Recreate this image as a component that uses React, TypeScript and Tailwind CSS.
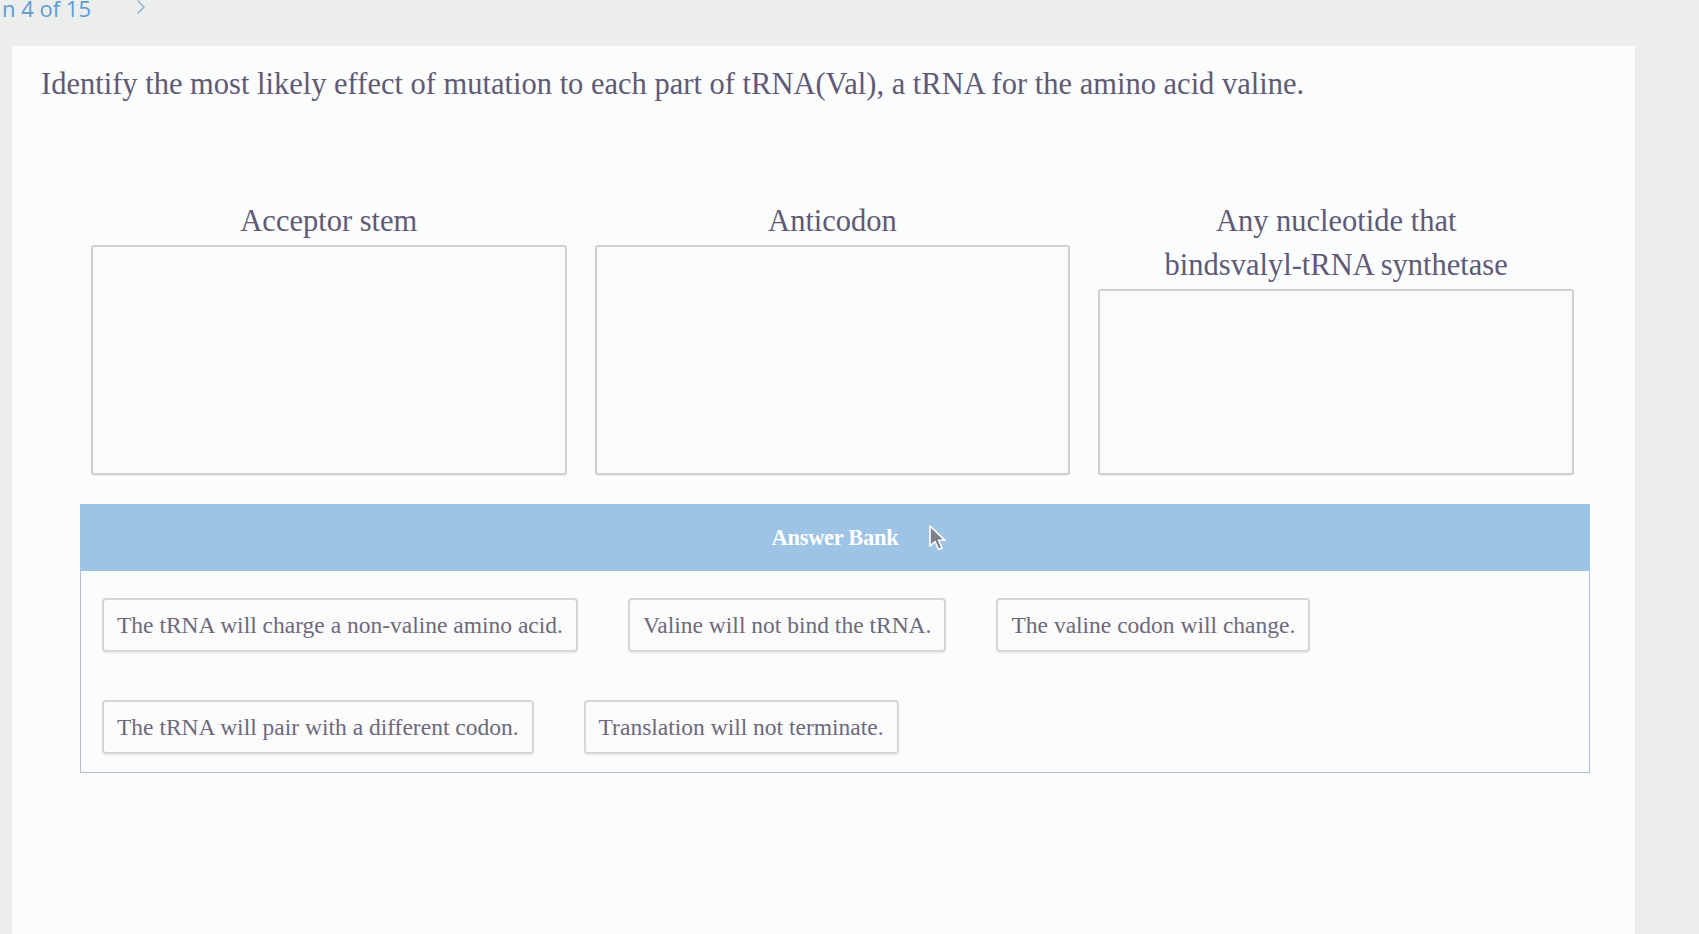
import { ChevronRight } from "lucide-react";

const serif = { fontFamily: '"Liberation Serif", "Times New Roman", serif' };

const targets = [
    { label: "Acceptor stem" },
    { label: "Anticodon" },
    { label: "Any nucleotide that bindsvalyl-tRNA synthetase" },
];

const answers = [
    "The tRNA will charge a non-valine amino acid.",
    "Valine will not bind the tRNA.",
    "The valine codon will change.",
    "The tRNA will pair with a different codon.",
    "Translation will not terminate.",
];

const Cursor = () => (
    <svg width="22" height="28" viewBox="0 0 22 28" className="absolute left-[848px] top-[20px]">
        <path
            d="M2 2 L2 22 L7 17.5 L10.5 25.5 L14 24 L10.6 16.3 L17 16.3 Z"
            fill="#7c818c"
            stroke="#ffffff"
            strokeWidth="1.6"
            strokeLinejoin="round"
        />
    </svg>
);

export default function App() {
    return (
        <div className="min-h-[934px] w-full bg-[#eceeee] flex flex-col overflow-hidden" style={serif}>
            {/* question pager, scrolled partly out of view */}
            <div className="h-[46px] flex items-start pl-[2px]">
                <div
                    className="flex items-center gap-[38px] -mt-[6px] text-[22px] leading-[28px] text-[#5d9bd3]"
                    style={{ fontFamily: '"Open Sans", "Noto Sans", sans-serif' }}
                >
                    <span>n 4 of 15</span>
                    <ChevronRight className="w-[24px] h-[24px] -mt-[2px] text-[#8fb6dc]" strokeWidth={1.6} />
                </div>
            </div>

            <div className="flex-1 ml-[12px] w-[1623px] bg-[#fbfcfc] pb-[120px]">
                <h1 className="mt-[21px] pl-[29px] text-[30.5px] leading-[34px] text-[#605a76]">
                    Identify the most likely effect of mutation to each part of tRNA(Val), a tRNA for the amino acid valine.
                </h1>

                {/* drop targets */}
                <div className="ml-[79px] mt-[98px] w-[1483px] grid grid-cols-3 gap-[28px]">
                    {targets.map((t) => (
                        <div key={t.label} className="h-[276px] flex flex-col">
                            <div className="px-[50px] text-center text-[30.5px] leading-[44px] text-[#605a76]">
                                {t.label}
                            </div>
                            <div className="flex-1 mt-[2px] rounded-[3px] border-2 border-[#cfd0d6] bg-[#fafbfb] shadow-[0_1px_1px_rgba(0,0,0,0.06)]" />
                        </div>
                    ))}
                </div>

                {/* answer bank */}
                <div className="ml-[68px] mt-[29px] w-[1510px]">
                    <div className="relative h-[67px] bg-[#9dc3e5] flex items-center justify-center">
                        <span className="text-[22.5px] font-bold text-white tracking-[-0.3px]">Answer Bank</span>
                        <Cursor />
                    </div>
                    <div className="border border-t-0 border-[#b5bed8] pt-[27px] pb-[18px] pl-[21px] pr-[21px] flex flex-wrap gap-x-[50px] gap-y-[48px]">
                        {answers.map((a) => (
                            <div
                                key={a}
                                className="px-[13px] py-[12px] rounded-[4px] border-2 border-[#d6d6da] bg-[#fbfbfb] text-[23.5px] leading-[26px] text-[#6d697c] shadow-[0_2px_2px_rgba(0,0,0,0.05)]"
                            >
                                {a}
                            </div>
                        ))}
                    </div>
                </div>
            </div>
        </div>
    );
}
